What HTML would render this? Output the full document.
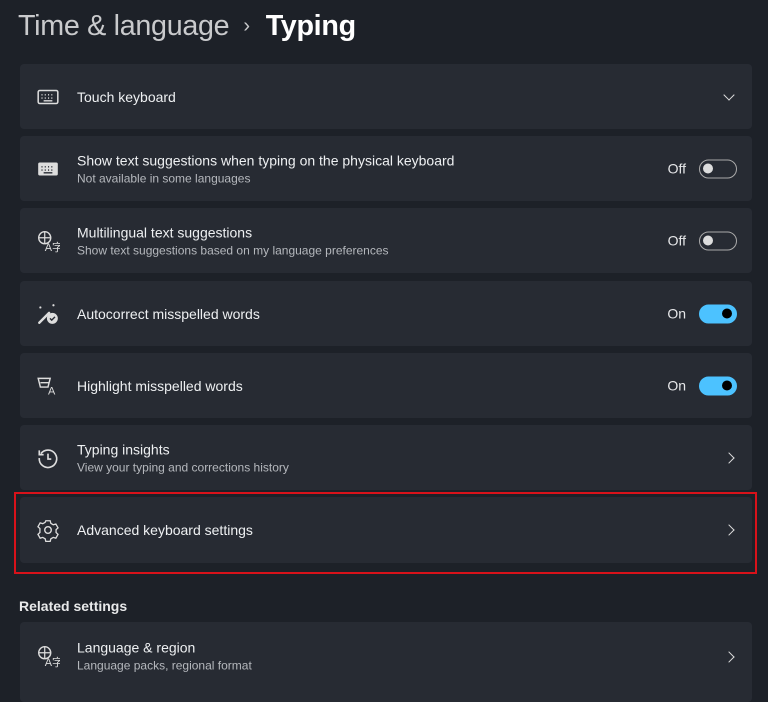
<!DOCTYPE html>
<html><head><meta charset="utf-8"><style>
body{margin:0;width:768px;height:689px;overflow:hidden;background:#1d2128;font-family:"Liberation Sans",sans-serif;color:#fff;position:relative}
.t{position:absolute;top:10px;left:18px;font-size:28.7px;letter-spacing:-0.3px}
.t .a{color:#c9cacc}.t .c{color:#c9cacc;font-size:20px;margin:0 16px 0 14px;position:relative;top:-3px}
.card{position:absolute;left:20px;width:732px;background:#272b33;border-radius:4px}
.ic{position:absolute;left:16px;top:50%;transform:translateY(-50%);width:24px;height:24px}
.tx{position:absolute;left:57px;top:50%;transform:translateY(-50%)}
.m{font-size:14px;color:#eef0f2}.s{font-size:12px;color:#b5b8bd;margin-top:3px}
.r{position:absolute;right:15px;top:50%;transform:translateY(-50%);display:flex;align-items:center;font-size:14px;color:#e6e7e9}
.sw{width:38px;height:19px;border-radius:11px;border:1.5px solid #aaa;margin-left:13px;position:relative;box-sizing:border-box}
.sw::after{content:"";position:absolute;left:3px;top:3px;width:10px;height:10px;border-radius:50%;background:#ddd}
.sw.on{background:#4cc2ff;border-color:#4cc2ff}.sw.on::after{left:22px;background:#000}
.chev{width:7px;height:7px;border-right:1.6px solid #ddd;border-bottom:1.6px solid #ddd;transform:rotate(-45deg);margin-right:4px}
.chev.d{transform:rotate(45deg);margin-top:-4px}
</style></head><body>
<div class="t"><span class="a">Time &amp; language</span><span class="c">›</span><b style="font-weight:600">Typing</b></div>

<div class="card" style="top:64px;height:65px">
<svg class="ic" viewBox="0 0 22 22"><rect x="2" y="5" width="18" height="12" rx="1.5" fill="none" stroke="#ddd" stroke-width="1.4"/><path d="M5 9h1M8 9h1M11 9h1M14 9h1M17 9h0M5 12h1M8 12h1M11 12h1M14 12h1M7 14.5h8" stroke="#ddd" stroke-width="1.3"/></svg>
<div class="tx"><div class="m">Touch keyboard</div></div><div class="r"><div class="chev d"></div></div></div>

<div class="card" style="top:136px;height:65px">
<svg class="ic" viewBox="0 0 22 22"><rect x="2" y="5" width="18" height="12" rx="1.5" fill="#ddd"/><path d="M5 9h1M8 9h1M11 9h1M14 9h1M5 12h1M8 12h1M11 12h1M14 12h1M7 14.5h8" stroke="#272b33" stroke-width="1.3"/></svg>
<div class="tx"><div class="m">Show text suggestions when typing on the physical keyboard</div><div class="s">Not available in some languages</div></div><div class="r">Off<div class="sw"></div></div></div>

<div class="card" style="top:208px;height:65px">
<svg class="ic" viewBox="0 0 22 22"><circle cx="8" cy="8" r="5.5" fill="none" stroke="#ddd" stroke-width="1.3"/><path d="M2.5 8h11M8 2.5v11" stroke="#ddd" stroke-width="1.1"/><text x="8" y="20" font-size="10" fill="#ddd" font-family="Liberation Sans, Noto Sans CJK SC, sans-serif">A字</text></svg>
<div class="tx"><div class="m">Multilingual text suggestions</div><div class="s">Show text suggestions based on my language preferences</div></div><div class="r">Off<div class="sw"></div></div></div>

<div class="card" style="top:281px;height:65px">
<svg class="ic" viewBox="0 0 22 22"><path d="M3 19l9-9" stroke="#ddd" stroke-width="2.2" stroke-linecap="round"/><circle cx="15" cy="15" r="5" fill="#ddd"/><path d="M12.8 15l1.6 1.6 3-3" stroke="#272b33" stroke-width="1.3" fill="none"/><circle cx="4" cy="5" r="1" fill="#ddd"/><circle cx="16" cy="3" r="1" fill="#ddd"/></svg>
<div class="tx"><div class="m">Autocorrect misspelled words</div></div><div class="r">On<div class="sw on"></div></div></div>

<div class="card" style="top:353px;height:65px">
<svg class="ic" viewBox="0 0 22 22"><path d="M2 4h11l-2 8H4z M4 8h8" fill="none" stroke="#ddd" stroke-width="1.3"/><text x="11" y="19" font-size="10" fill="#ddd" font-family="Liberation Sans">A</text></svg>
<div class="tx"><div class="m">Highlight misspelled words</div></div><div class="r">On<div class="sw on"></div></div></div>

<div class="card" style="top:425px;height:65px">
<svg class="ic" viewBox="0 0 22 22"><path d="M4.5 7A8 8 0 1 1 3 11" fill="none" stroke="#ddd" stroke-width="1.5"/><path d="M3 4v4h4M11 7v5h3" fill="none" stroke="#ddd" stroke-width="1.5"/></svg>
<div class="tx"><div class="m">Typing insights</div><div class="s">View your typing and corrections history</div></div><div class="r"><div class="chev"></div></div></div>

<div class="card" style="top:497px;height:66px">
<svg class="ic" viewBox="0 0 22 22"><circle cx="11" cy="11" r="3" fill="none" stroke="#ddd" stroke-width="1.3"/><path d="M9 2.5h4l.6 2.4 2.2 1.3 2.4-.7 2 3.5-1.8 1.7v2.6l1.8 1.7-2 3.5-2.4-.7-2.2 1.3-.6 2.4H9l-.6-2.4-2.2-1.3-2.4.7-2-3.5 1.8-1.7V9.7L1.8 8l2-3.5 2.4.7 2.2-1.3z" fill="none" stroke="#ddd" stroke-width="1.2"/></svg>
<div class="tx"><div class="m">Advanced keyboard settings</div></div><div class="r"><div class="chev"></div></div></div>
<div style="position:absolute;left:14px;top:492px;width:739px;height:78px;border:2px solid #d8121a"></div>

<div style="position:absolute;left:19px;top:598px;font-size:14px;font-weight:600;color:#e8e9ea">Related settings</div>

<div class="card" style="top:622px;height:80px">
<svg class="ic" viewBox="0 0 22 22" style="top:34px"><circle cx="8" cy="8" r="5.5" fill="none" stroke="#ddd" stroke-width="1.3"/><path d="M2.5 8h11M8 2.5v11" stroke="#ddd" stroke-width="1.1"/><text x="8" y="20" font-size="10" fill="#ddd" font-family="Liberation Sans, Noto Sans CJK SC, sans-serif">A字</text></svg>
<div class="tx" style="top:34px"><div class="m">Language &amp; region</div><div class="s">Language packs, regional format</div></div><div class="r" style="top:35px"><div class="chev"></div></div></div>
</body></html>
